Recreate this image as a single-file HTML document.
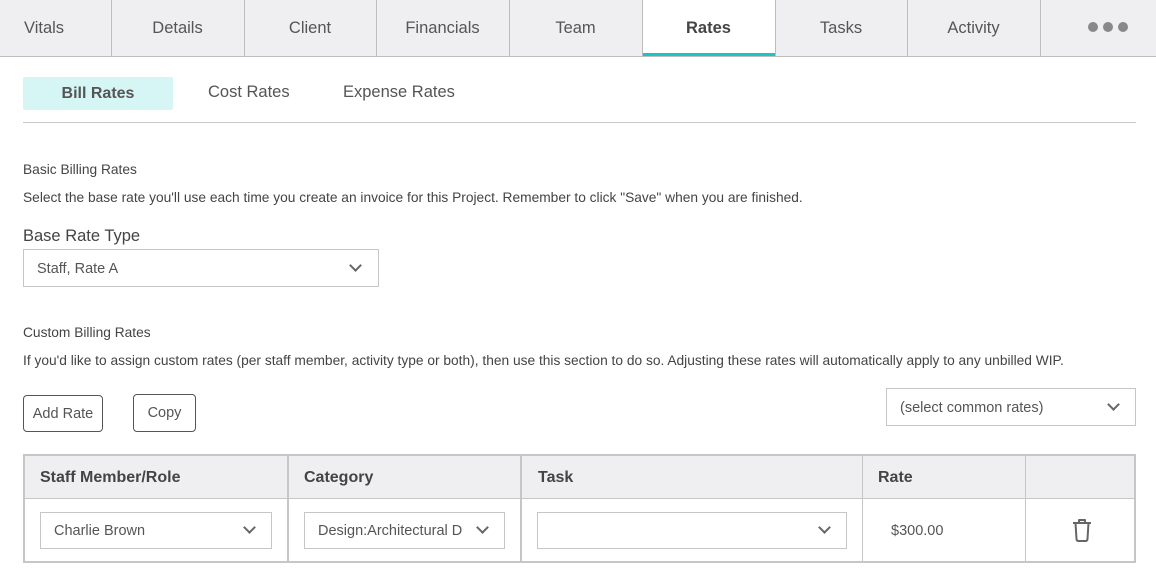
<!DOCTYPE html>
<html><head><style>
*{box-sizing:border-box;margin:0;padding:0}
body{width:1156px;height:568px;overflow:hidden;background:#fff;font-family:"Liberation Sans",Arial,sans-serif;color:#444;position:relative}
.a{position:absolute;white-space:nowrap}
.tab{position:absolute;top:0;height:56px;background:#efeff1;font-size:16.5px;color:#555;text-align:center;line-height:56px}
.vl{position:absolute;top:0;width:1px;height:56px;background:#bdbdbd}
.sel{position:absolute;border:1px solid #c6c6c6;background:#fff;font-size:15px;color:#555;padding-left:13px;white-space:nowrap}
.chev{position:absolute;width:9px;height:9px;border-right:2px solid #666;border-bottom:2px solid #666;transform:rotate(45deg)}
.btn{position:absolute;border:1px solid #555;border-radius:4px;color:#555;text-align:center}
.s{font-size:13.75px}
</style></head><body>
<div class="tab" style="left:0;width:1156px"></div>
<div class="a" style="left:0;top:56px;width:1156px;height:1px;background:#bdbdbd"></div>
<div class="tab" style="left:0;width:111px;text-align:left;padding-left:24px">Vitals</div>
<div class="tab" style="left:111px;width:133px">Details</div>
<div class="tab" style="left:244px;width:132px">Client</div>
<div class="tab" style="left:376px;width:133px">Financials</div>
<div class="tab" style="left:509px;width:133px">Team</div>
<div class="tab" style="left:642px;width:133px;background:#fff;border-bottom:3px solid #1cc4c4;font-weight:bold;color:#444;line-height:57px;height:56px">Rates</div>
<div class="tab" style="left:775px;width:132px">Tasks</div>
<div class="tab" style="left:907px;width:133px">Activity</div>
<div class="vl" style="left:111px"></div><div class="vl" style="left:244px"></div><div class="vl" style="left:376px"></div><div class="vl" style="left:509px"></div><div class="vl" style="left:642px"></div><div class="vl" style="left:775px"></div><div class="vl" style="left:907px"></div><div class="vl" style="left:1040px"></div>
<svg class="a" style="left:1087px;top:21px" width="42" height="12"><circle cx="6" cy="6" r="5" fill="#888"/><circle cx="21" cy="6" r="5" fill="#888"/><circle cx="36" cy="6" r="5" fill="#888"/></svg>

<div class="a" style="left:23px;top:77px;width:150px;height:33px;background:#d6f5f5;border-radius:2px;font-weight:bold;font-size:16px;color:#555;text-align:center;line-height:33px">Bill Rates</div>
<div class="a" style="left:208px;top:83px;font-size:16.5px;color:#555">Cost Rates</div>
<div class="a" style="left:343px;top:83px;font-size:16.5px;color:#555">Expense Rates</div>
<div class="a" style="left:23px;top:122px;width:1113px;height:1px;background:#c8c8c8"></div>

<div class="a s" style="left:23px;top:162px">Basic Billing Rates</div>
<div class="a s" style="left:23px;top:190px">Select the base rate you'll use each time you create an invoice for this Project. Remember to click "Save" when you are finished.</div>
<div class="a" style="left:23px;top:227px;font-size:16.5px">Base Rate Type</div>
<div class="sel" style="left:23px;top:249px;width:356px;height:38px;line-height:38px;font-size:14.5px">Staff, Rate A<div class="chev" style="right:18px;top:11px"></div></div>

<div class="a s" style="left:23px;top:325px">Custom Billing Rates</div>
<div class="a s" style="left:23px;top:353px">If you'd like to assign custom rates (per staff member, activity type or both), then use this section to do so. Adjusting these rates will automatically apply to any unbilled WIP.</div>

<div class="btn" style="left:23px;top:395px;width:80px;height:37px;line-height:37px;font-size:14.5px">Add Rate</div>
<div class="btn" style="left:133px;top:394px;width:63px;height:38px;line-height:37px;font-size:14.5px">Copy</div>
<div class="sel" style="left:886px;top:388px;width:250px;height:38px;line-height:38px;font-size:14.5px">(select common rates)<div class="chev" style="right:17px;top:11px"></div></div>

<div class="a" style="left:23px;top:454px;width:1113px;height:109px;border:2px solid #c6c6c6"></div>
<div class="a" style="left:25px;top:456px;width:1109px;height:43px;background:#efeff1;border-bottom:1px solid #c6c6c6"></div>
<div class="a" style="left:287px;top:456px;width:2px;height:105px;background:#c6c6c6"></div>
<div class="a" style="left:520px;top:456px;width:2px;height:105px;background:#c6c6c6"></div>
<div class="a" style="left:862px;top:456px;width:1px;height:105px;background:#c6c6c6"></div>
<div class="a" style="left:1025px;top:456px;width:1px;height:105px;background:#c6c6c6"></div>
<div class="a" style="left:40px;top:469px;font-weight:bold;font-size:16px;color:#444">Staff Member/Role</div>
<div class="a" style="left:304px;top:469px;font-weight:bold;font-size:16px;color:#444">Category</div>
<div class="a" style="left:538px;top:469px;font-weight:bold;font-size:16px;color:#444">Task</div>
<div class="a" style="left:878px;top:469px;font-weight:bold;font-size:16px;color:#444">Rate</div>

<div class="sel" style="left:40px;top:512px;width:232px;height:37px;line-height:37px;font-size:14.5px">Charlie Brown<div class="chev" style="right:17px;top:10px"></div></div>
<div class="sel" style="left:304px;top:512px;width:201px;height:37px;line-height:37px;font-size:14.5px"><div style="width:144px;overflow:hidden">Design:Architectural Design</div><div class="chev" style="right:17px;top:10px"></div></div>
<div class="sel" style="left:537px;top:512px;width:310px;height:37px"><div class="chev" style="right:17px;top:10px"></div></div>
<div class="a" style="left:891px;top:523px;font-size:14.5px;color:#555">$300.00</div>
<svg class="a" style="left:1071px;top:518px" width="22" height="25" viewBox="0 0 22 25"><path d="M2 5H20M8 5V2H14V5M4.5 5L5.5 21Q5.7 23 7.5 23H14.5Q16.3 23 16.5 21L17.5 5" fill="none" stroke="#666" stroke-width="2" stroke-linejoin="round"/></svg>
</body></html>
